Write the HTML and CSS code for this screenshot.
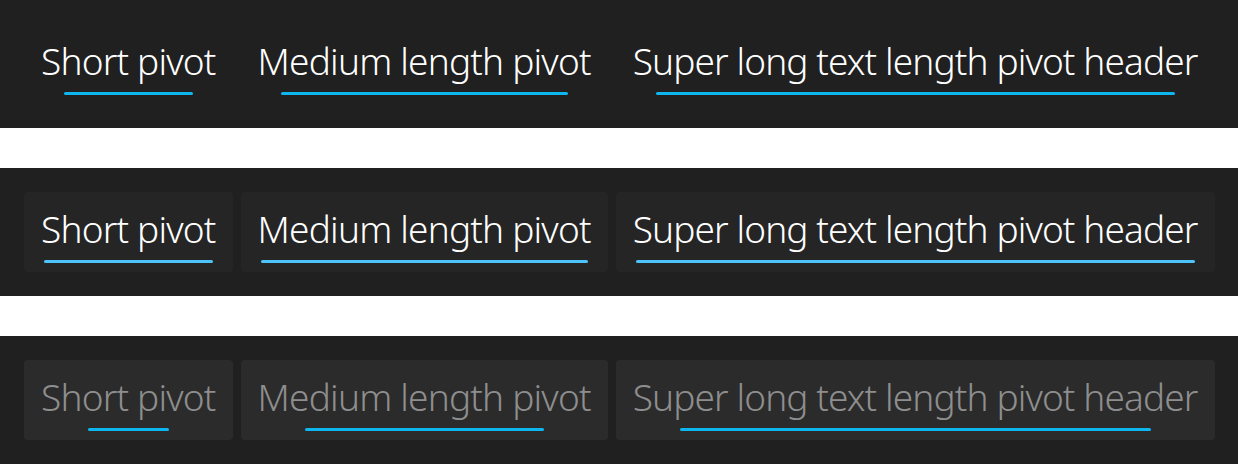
FILE: index.html
```html
<!DOCTYPE html>
<html lang="en">
<head>
<meta charset="utf-8">
<title>Pivot headers</title>
<link rel="stylesheet" href="styles.css">
</head>
<body>
  <div class="page">
    <nav class="pivot pivot-plain">
      <div class="item"><span class="label">Short pivot<span class="bar"></span></span></div>
      <div class="item"><span class="label">Medium length pivot<span class="bar"></span></span></div>
      <div class="item"><span class="label">Super long text length pivot header<span class="bar"></span></span></div>
    </nav>
    <nav class="pivot pivot-hover">
      <div class="item"><span class="label">Short pivot<span class="bar"></span></span></div>
      <div class="item"><span class="label">Medium length pivot<span class="bar"></span></span></div>
      <div class="item"><span class="label">Super long text length pivot header<span class="bar"></span></span></div>
    </nav>
    <nav class="pivot pivot-pressed">
      <div class="item"><span class="label">Short pivot<span class="bar"></span></span></div>
      <div class="item"><span class="label">Medium length pivot<span class="bar"></span></span></div>
      <div class="item"><span class="label">Super long text length pivot header<span class="bar"></span></span></div>
    </nav>
  </div>
</body>
</html>
```
FILE: styles.css
```css
* { box-sizing: border-box; }
html, body { margin: 0; padding: 0; background: #ffffff; }
.page {
  display: flex;
  flex-direction: column;
  gap: 40px;
  width: 1238px;
}
.pivot {
  display: flex;
  gap: 8px;
  height: 128px;
  padding: 24px 24px;
  background: #202020;
  font-family: "Noto Sans", "Open Sans", sans-serif;
  font-weight: 300;
  font-size: 37px;
  letter-spacing: -0.8px;
  color: #ffffff;
}
.item {
  flex: none;
  height: 80px;
  padding: 13px 17px 0 17px;
  border-radius: 4px;
  display: flex;
  align-items: flex-start;
}
.item:last-child { letter-spacing: -0.88px; }
.label {
  display: inline-flex;
  flex-direction: column;
  align-items: center;
  line-height: 48px;
  white-space: nowrap;
}
.bar {
  display: block;
  height: 3px;
  margin-top: 7px;
  border-radius: 2px;
  background: #0db6ef;
}
.pivot-plain .bar { width: calc(100% - 46px); }
.pivot-hover .item { background: #252525; }
.pivot-hover .bar { width: calc(100% - 6px); background: #4cc4fa; }
.pivot-pressed .item { background: #2b2b2b; color: #8e8e8e; }
.pivot-pressed .bar { width: calc(100% - 94px); }
```
